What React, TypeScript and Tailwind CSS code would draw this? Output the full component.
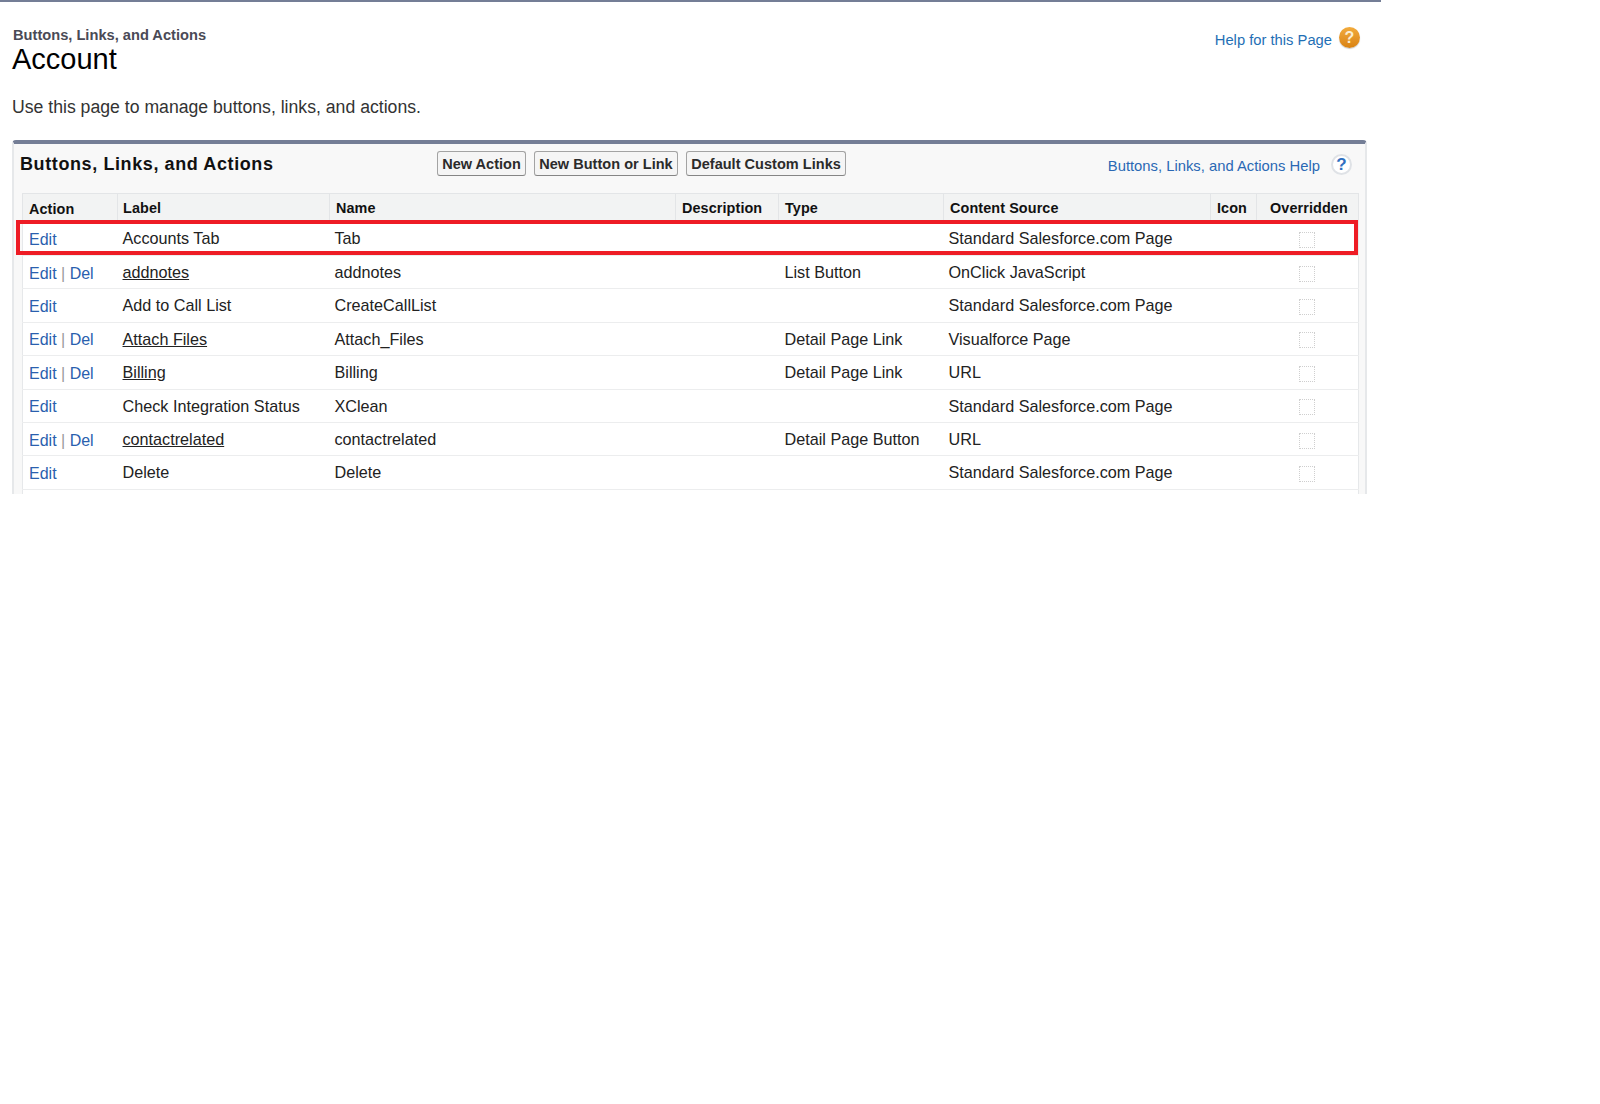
const rows = [
  { del: false, label: "Accounts Tab", link: false, name: "Tab", type: "", source: "Standard Salesforce.com Page" },
  { del: true, label: "addnotes", link: true, name: "addnotes", type: "List Button", source: "OnClick JavaScript" },
  { del: false, label: "Add to Call List", link: false, name: "CreateCallList", type: "", source: "Standard Salesforce.com Page" },
  { del: true, label: "Attach Files", link: true, name: "Attach_Files", type: "Detail Page Link", source: "Visualforce Page" },
  { del: true, label: "Billing", link: true, name: "Billing", type: "Detail Page Link", source: "URL" },
  { del: false, label: "Check Integration Status", link: false, name: "XClean", type: "", source: "Standard Salesforce.com Page" },
  { del: true, label: "contactrelated", link: true, name: "contactrelated", type: "Detail Page Button", source: "URL" },
  { del: false, label: "Delete", link: false, name: "Delete", type: "", source: "Standard Salesforce.com Page" },
];

function Btn({ children, w }: { children: string; w: string }) {
  return (
    <button className={`${w} h-[25px] rounded-[3px] border border-[#a3a3a3] border-b-[#858585] bg-[#f5f5f5] text-center text-[14.5px] font-bold leading-[22px] tracking-[0.03px] text-[#2b2b2b]`}>
      {children}
    </button>
  );
}

function Help({ orange }: { orange?: boolean }) {
  return orange ? (
    <span className="flex h-[21px] w-[21px] items-center justify-center rounded-full bg-linear-to-b from-[#f2ab3c] to-[#d9820f] text-[16px] font-bold leading-none text-[#fbeed2] shadow-[0_1px_1px_#c9c9c9]">?</span>
  ) : (
    <span className="flex h-[21px] w-[21px] items-center justify-center rounded-full border-2 border-[#dfe2e6] bg-white text-[17px] font-bold leading-none text-[#2f6fc0]">?</span>
  );
}

export default function App() {
  return (
    <div className="min-h-[1104px] bg-white font-['Liberation_Sans',Arial,sans-serif]">
      <div className="w-[1381px]">
        <div className="h-[2px] w-full bg-[#747e96]" />
        <div className="flex justify-between pl-[12px] pr-[21px]">
          <div>
            <div className="mt-[25px] pl-[1px] text-[14.65px] font-bold leading-[16px] text-[#4a4a56]">Buttons, Links, and Actions</div>
            <div className="text-[29px] leading-[33px] text-black">Account</div>
            <div className="mt-[20px] text-[17.65px] leading-[23px] text-[#333]">Use this page to manage buttons, links, and actions.</div>
          </div>
          <div className="mt-[25px] flex h-[21px] items-center gap-[7px]">
            <span className="mt-[5px] text-[14.75px] text-[#1f6fb5]">Help for this Page</span>
            <Help orange />
          </div>
        </div>

        <div className="ml-[12px] mr-[14px] mt-[21px] h-[354px] overflow-hidden rounded-t-[4px] border-x-2 border-t-4 border-x-[#e6e8ea] border-t-[#747e96] bg-[#f8f8f8]">
          <div className="flex h-[49px] items-start pl-[6px] pr-[13px]">
            <div className="mt-[9px] w-[417px] text-[18px] font-bold leading-[22px] tracking-[0.6px] text-[#111]">Buttons, Links, and Actions</div>
            <div className="mt-[7px] flex gap-[8px]">
              <Btn w="w-[89px]">New Action</Btn>
              <Btn w="w-[144px]">New Button or Link</Btn>
              <Btn w="w-[160px]">Default Custom Links</Btn>
            </div>
            <div className="ml-auto mt-[8px] flex items-center gap-[11px]">
              <span className="mt-[3px] text-[14.8px] text-[#2a68b4]">Buttons, Links, and Actions Help</span>
              <Help />
            </div>
          </div>

          <div className="relative ml-[8px] mr-[7px]">
            <table className="w-[1336px] table-fixed border-collapse border-x border-[#e6e8ea] bg-white text-left">
              <colgroup>
                <col className="w-[95px]" />
                <col className="w-[212px]" />
                <col className="w-[346px]" />
                <col className="w-[103px]" />
                <col className="w-[165px]" />
                <col className="w-[267px]" />
                <col className="w-[46px]" />
                <col className="w-[102px]" />
              </colgroup>
              <thead>
                <tr className="h-[28px] bg-[#f2f3f3] text-[14.4px] tracking-[0.1px] text-[#111]">
                  {["Action", "Label", "Name", "Description", "Type", "Content Source", "Icon", "Overridden"].map((h, i) => (
                    <th key={h} className={`border border-[#e3e5e7] font-bold ${i === 0 ? "pt-[5px]" : "pt-[3px]"} ${i === 7 ? "pl-[13px]" : i === 1 ? "pl-[5px]" : "pl-[6px]"}`}>{h}</th>
                  ))}
                </tr>
              </thead>
              <tbody>
                {rows.map((r, i) => (
                  <tr key={r.name} className={`${i === 0 ? "h-[34px]" : "h-[33.4px]"} border-b border-[#ecedee] text-[16.2px] text-[#222]`}>
                    <td className="pl-[6px] pt-[3px] text-[16px] text-[#2a5fae]">
                      Edit
                      {r.del && (
                        <>
                          <span className="text-[#999]"> | </span>Del
                        </>
                      )}
                    </td>
                    <td className={`pl-[5px] ${r.link ? "underline" : ""}`}>{r.label}</td>
                    <td className="pl-[5px]">{r.name}</td>
                    <td />
                    <td className="pl-[6px]">{r.type}</td>
                    <td className="pl-[5px]">{r.source}</td>
                    <td />
                    <td>
                      <div className="ml-[42px] mt-[3px] h-[16px] w-[16px] border border-dotted border-[#cfcfcf]" />
                    </td>
                  </tr>
                ))}
                <tr className="h-[20px]">
                  <td colSpan={8} />
                </tr>
              </tbody>
            </table>
            <div className="pointer-events-none absolute left-[-6px] top-[27px] h-[35px] w-[1342px] border-[4px] border-[#ee1c25]" />
          </div>
        </div>
      </div>
    </div>
  );
}
